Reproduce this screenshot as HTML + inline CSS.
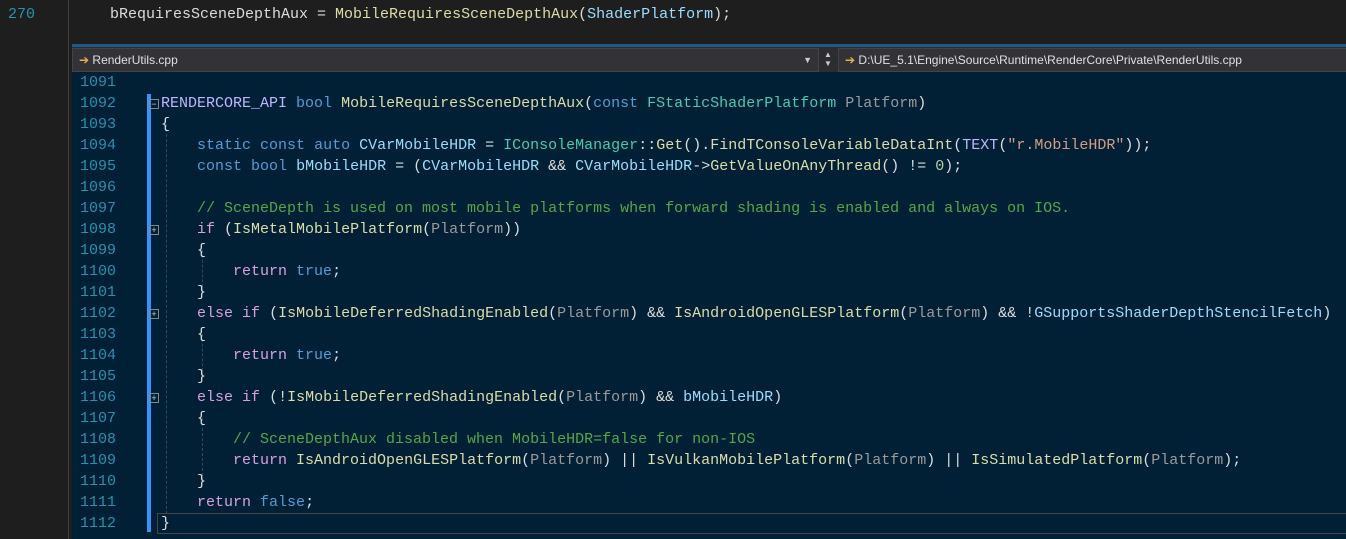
<!DOCTYPE html>
<html><head><style>
body{margin:0;width:1346px;height:539px;background:#1e1e1e;overflow:hidden;position:relative;font-family:"Liberation Mono",monospace;}
.mono{font-family:"Liberation Mono",monospace;font-size:15px;white-space:pre;}
#gut{position:absolute;left:0;top:0;width:68px;height:539px;background:#1e1e1e;border-right:1px solid #3f3f46;}
#gut span{position:absolute;left:8px;top:6px;color:#2b91af;}
#top{position:absolute;left:69px;top:0;width:1277px;height:44px;background:#1e1e1e;}
#blue{position:absolute;left:72px;top:44px;width:1274px;height:3px;background:#1c5a8a;}
#bar{position:absolute;left:72px;top:47px;width:1274px;height:25px;background:#2d2d30;font-family:"Liberation Sans",sans-serif;font-size:12px;color:#e0e0e0;}
.cb{position:absolute;top:1px;height:22px;background:#333337;border:1px solid #434346;line-height:22px;}
#code{position:absolute;left:72px;top:72px;width:1274px;height:467px;background:#012035;}
.ln{position:absolute;left:0;width:44px;text-align:right;color:#2b91af;}
.l{position:absolute;left:89px;color:#dcdcdc;}
.k{color:#569cd6}.c{color:#d8a0df}.f{color:#dcdcaa}.t{color:#4ec9b0}.p{color:#9a9a9a}.v{color:#9cdcfe}.s{color:#d69d85}.m{color:#beb7ff}.g{color:#57a64a}
.fold{position:absolute;left:77px;width:8px;height:8px;border:1px solid #888;color:#ccc;font-size:9px;line-height:8px;text-align:center;font-family:"Liberation Sans",sans-serif;}
.ig{position:absolute;width:0;border-left:1px dashed #2f4a5c;}
</style></head><body>
<div id="gut" class="mono"><span>270</span></div>
<div id="top" class="mono"><span style="position:absolute;left:41px;top:6px;color:#dcdcdc">bRequiresSceneDepthAux = <span class="f">MobileRequiresSceneDepthAux</span>(<span class="v">ShaderPlatform</span>);</span></div>
<div id="blue"></div>
<div id="bar">
 <div class="cb" style="left:0;width:745px;"><span style="color:#e8b04a;padding-left:6px">➔</span> RenderUtils.cpp<span style="position:absolute;right:6px;font-size:9px;color:#ccc">▼</span></div>
 <div style="position:absolute;left:751px;top:3px;width:10px;height:18px;color:#ccc;font-size:8px;line-height:9px;text-align:center">▲<br>▼</div>
 <div class="cb" style="left:766px;width:508px;"><span style="color:#e8b04a;padding-left:6px">➔</span> D:\UE_5.1\Engine\Source\Runtime\RenderCore\Private\RenderUtils.cpp</div>
</div>
<div id="code" class="mono">
<div style="position:absolute;left:75px;top:22px;width:4px;height:438px;background:#3794ff"></div>
<div style="position:absolute;left:85px;top:441px;width:1189px;height:19px;border:1px solid #464646"></div>
<div class="ig" style="left:94px;top:52px;height:390px"></div>
<div class="ig" style="left:130px;top:178px;height:42px"></div>
<div class="ig" style="left:130px;top:262px;height:42px"></div>
<div class="ig" style="left:130px;top:346px;height:63px"></div>
<div class="fold" style="top:27px">−</div><div class="fold" style="top:153px">+</div><div class="fold" style="top:237px">+</div><div class="fold" style="top:321px">+</div>
<div class="ln" style="top:2px">1091</div>
<div class="ln" style="top:23px">1092</div><div class="l" style="top:23px"><span class="m">RENDERCORE_API</span> <span class="k">bool</span> <span class="f">MobileRequiresSceneDepthAux</span>(<span class="k">const</span> <span class="t">FStaticShaderPlatform</span> <span class="p">Platform</span>)</div>
<div class="ln" style="top:44px">1093</div><div class="l" style="top:44px">{</div>
<div class="ln" style="top:65px">1094</div><div class="l" style="top:65px">    <span class="k">static</span> <span class="k">const</span> <span class="k">auto</span> <span class="v">CVarMobileHDR</span> = <span class="t">IConsoleManager</span>::<span class="f">Get</span>().<span class="f">FindTConsoleVariableDataInt</span>(<span class="m">TEXT</span>(<span class="s">"r.MobileHDR"</span>));</div>
<div class="ln" style="top:86px">1095</div><div class="l" style="top:86px">    <span class="k">const</span> <span class="k">bool</span> <span class="v">bMobileHDR</span> = (<span class="v">CVarMobileHDR</span> &amp;&amp; <span class="v">CVarMobileHDR</span>-&gt;<span class="f">GetValueOnAnyThread</span>() != <span style="color:#b5cea8">0</span>);</div>
<div class="ln" style="top:107px">1096</div>
<div class="ln" style="top:128px">1097</div><div class="l" style="top:128px">    <span class="g">// SceneDepth is used on most mobile platforms when forward shading is enabled and always on IOS.</span></div>
<div class="ln" style="top:149px">1098</div><div class="l" style="top:149px">    <span class="c">if</span> (<span class="f">IsMetalMobilePlatform</span>(<span class="p">Platform</span>))</div>
<div class="ln" style="top:170px">1099</div><div class="l" style="top:170px">    {</div>
<div class="ln" style="top:191px">1100</div><div class="l" style="top:191px">        <span class="c">return</span> <span class="k">true</span>;</div>
<div class="ln" style="top:212px">1101</div><div class="l" style="top:212px">    }</div>
<div class="ln" style="top:233px">1102</div><div class="l" style="top:233px">    <span class="c">else</span> <span class="c">if</span> (<span class="f">IsMobileDeferredShadingEnabled</span>(<span class="p">Platform</span>) &amp;&amp; <span class="f">IsAndroidOpenGLESPlatform</span>(<span class="p">Platform</span>) &amp;&amp; !<span class="v">GSupportsShaderDepthStencilFetch</span>)</div>
<div class="ln" style="top:254px">1103</div><div class="l" style="top:254px">    {</div>
<div class="ln" style="top:275px">1104</div><div class="l" style="top:275px">        <span class="c">return</span> <span class="k">true</span>;</div>
<div class="ln" style="top:296px">1105</div><div class="l" style="top:296px">    }</div>
<div class="ln" style="top:317px">1106</div><div class="l" style="top:317px">    <span class="c">else</span> <span class="c">if</span> (!<span class="f">IsMobileDeferredShadingEnabled</span>(<span class="p">Platform</span>) &amp;&amp; <span class="v">bMobileHDR</span>)</div>
<div class="ln" style="top:338px">1107</div><div class="l" style="top:338px">    {</div>
<div class="ln" style="top:359px">1108</div><div class="l" style="top:359px">        <span class="g">// SceneDepthAux disabled when MobileHDR=false for non-IOS</span></div>
<div class="ln" style="top:380px">1109</div><div class="l" style="top:380px">        <span class="c">return</span> <span class="f">IsAndroidOpenGLESPlatform</span>(<span class="p">Platform</span>) || <span class="f">IsVulkanMobilePlatform</span>(<span class="p">Platform</span>) || <span class="f">IsSimulatedPlatform</span>(<span class="p">Platform</span>);</div>
<div class="ln" style="top:401px">1110</div><div class="l" style="top:401px">    }</div>
<div class="ln" style="top:422px">1111</div><div class="l" style="top:422px">    <span class="c">return</span> <span class="k">false</span>;</div>
<div class="ln" style="top:443px">1112</div><div class="l" style="top:443px">}</div>
</div>
</body></html>
